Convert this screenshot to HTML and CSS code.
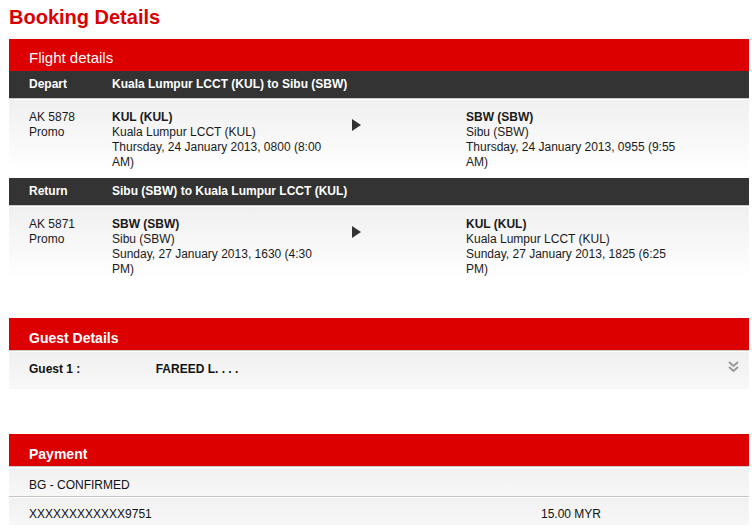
FILE: index.html
```html
<!DOCTYPE html>
<html>
<head>
<meta charset="utf-8">
<link rel="stylesheet" href="styles.css">
</head>
<body>
<div class="page">
  <h1 class="title">Booking Details</h1>

  <section class="panel flights">
    <div class="panel-head thin">Flight details</div>

    <div class="leg-head"><span class="leg-label">Depart</span><span>Kuala Lumpur LCCT (KUL) to Sibu (SBW)</span></div>
    <div class="leg-row">
      <div class="cell">AK 5878<br>Promo</div>
      <div class="cell stop"><b>KUL (KUL)</b><br>Kuala Lumpur LCCT (KUL)<br>Thursday, 24 January 2013, 0800 (8:00 AM)</div>
      <div class="cell arrow"><svg width="9" height="12" viewBox="0 0 9 12"><path d="M0 0 L9 6 L0 12 Z" fill="#333"/></svg></div>
      <div class="cell stop"><b>SBW (SBW)</b><br>Sibu (SBW)<br>Thursday, 24 January 2013, 0955 (9:55 AM)</div>
    </div>

    <div class="leg-head"><span class="leg-label">Return</span><span>Sibu (SBW) to Kuala Lumpur LCCT (KUL)</span></div>
    <div class="leg-row">
      <div class="cell">AK 5871<br>Promo</div>
      <div class="cell stop"><b>SBW (SBW)</b><br>Sibu (SBW)<br>Sunday, 27 January 2013, 1630 (4:30 PM)</div>
      <div class="cell arrow"><svg width="9" height="12" viewBox="0 0 9 12"><path d="M0 0 L9 6 L0 12 Z" fill="#333"/></svg></div>
      <div class="cell stop"><b>KUL (KUL)</b><br>Kuala Lumpur LCCT (KUL)<br>Sunday, 27 January 2013, 1825 (6:25 PM)</div>
    </div>
  </section>

  <section class="panel guests">
    <div class="panel-head">Guest Details</div>
    <div class="guest-row">
      <span class="guest-name">Guest 1 : <span class="redact r1"></span>FAREED L. . . .<span class="redact r2"></span></span>
      <svg class="chev" width="11" height="12" viewBox="0 0 11 12"><path d="M1 1 L5.5 5 L10 1 M1 6 L5.5 10 L10 6" fill="none" stroke="#999" stroke-width="2"/></svg>
    </div>
  </section>

  <section class="panel payment">
    <div class="panel-head">Payment</div>
    <div class="pay-row">BG - CONFIRMED</div>
    <div class="pay-row split"><span class="pay-card">XXXXXXXXXXXX9751</span><span>15.00 MYR</span></div>
  </section>
</div>
</body>
</html>
```

FILE: styles.css
```css
html, body {
  margin: 0;
  padding: 0;
  background: #fff;
}

.page {
  padding: 5px 3px 0 9px;
  font-family: "Liberation Sans", Arial, sans-serif;
  font-size: 12px;
  line-height: 15px;
  color: #1a1a1a;
}

.title {
  margin: 0 0 10px 0;
  font-size: 20px;
  line-height: 24px;
  font-weight: bold;
  color: #d80000;
}

.panel {
  width: 740px;
}

.flights { margin-bottom: 33px; }
.guests { margin-bottom: 45px; }

.panel-head {
  background: #dc0000;
  color: #fff;
  font-size: 14px;
  line-height: 17px;
  font-weight: bold;
  padding: 12px 20px 3px;
  border-bottom: 1px solid #c9c9c9;
  box-shadow: 0 1px 0 #fff;
  margin-bottom: 1px;
}

.panel-head.thin {
  font-size: 15px;
  line-height: 18px;
  font-weight: normal;
  padding: 10px 20px 4px;
  border-bottom: 0;
  margin-bottom: 0;
  box-shadow: none;
}

.leg-head {
  display: flex;
  background: #333;
  color: #fff;
  font-weight: bold;
  padding: 6px 20px 6px;
  border-bottom: 1px solid #c9c9c9;
  margin-bottom: 1px;
}

.leg-label {
  width: 83px;
  flex: none;
}

.leg-row {
  display: grid;
  grid-template-columns: 83px 240px 114px 216px;
  padding: 10px 20px 8px;
  background: linear-gradient(#f0f0f0, #fff 72px);
}

.cell.stop {
  padding-right: 24px;
}

.cell.stop:last-child {
  padding-right: 0;
}

.cell.arrow {
  padding-top: 9px;
}

.cell.arrow svg {
  display: block;
}

.guest-row {
  display: flex;
  justify-content: space-between;
  align-items: flex-start;
  padding: 10px 10px 12px 20px;
  background: linear-gradient(#f0f0f0, #fff 70px);
}

.guest-name {
  font-weight: bold;
  color: #111;
}

.redact {
  display: inline-block;
  height: 10px;
  vertical-align: middle;
}

.r1 { width: 72px; }
.r2 { width: 62px; }

.chev {
  display: block;
  margin-top: -1px;
}

.pay-row {
  padding: 10px 20px 3px;
  background: linear-gradient(#f1f1f1, #f7f7f7);
  color: #111;
}

.pay-row + .pay-row {
  border-top: 1px solid #c4c4c4;
  box-shadow: inset 0 1px 0 #fff;
  padding-top: 10px;
}

.pay-row.split {
  display: flex;
}

.pay-card {
  width: 512px;
}
```
